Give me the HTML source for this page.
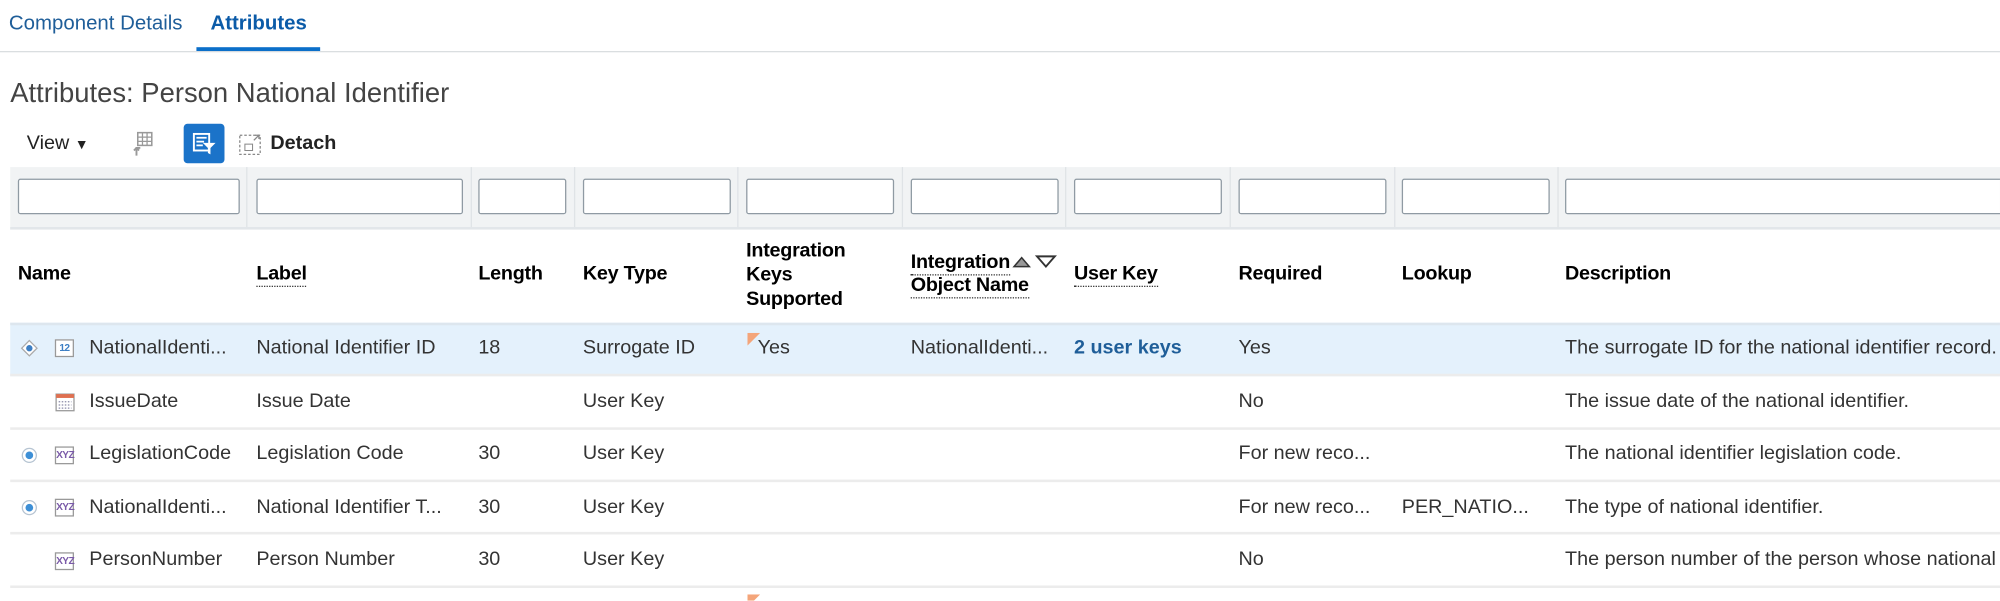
<!DOCTYPE html>
<html><head><meta charset="utf-8"><style>
html,body{margin:0;padding:0;background:#fff;width:2000px;height:600px;overflow:hidden}
#w{position:absolute;left:0;top:0;width:1568px;height:471px;overflow:hidden;transform:scale(1.2755);transform-origin:0 0;font-family:"Liberation Sans",Arial,sans-serif;color:#333}
.a{position:absolute;white-space:nowrap}
.t{font-size:15.5px}
.h{font-size:15.5px;font-weight:bold;color:#000;letter-spacing:-0.2px}
.u{border-bottom:1px dotted #333;padding-bottom:1px}
.inp{position:absolute;top:140px;height:28px;border:1px solid #8f9aa3;border-radius:2px;background:#fff;box-sizing:border-box}
.vd{position:absolute;top:131px;height:47px;width:1px;background:#dfe3e6}
.row{position:absolute;left:8px;width:1560px;border-bottom:2px solid #ececec;box-sizing:border-box}
.ic{position:absolute;left:43px;width:15px;height:14px;border:1px solid #999;background:#fff;box-sizing:border-box;font-size:8px;color:#7a5aa8;text-align:center;line-height:12px;font-weight:bold;letter-spacing:-0.5px}
.rad{position:absolute;left:17px;width:12px;height:12px;border-radius:50%;border:1px solid #b6c4d2;background:#fff;box-sizing:border-box}
.rad:after{content:"";position:absolute;left:2px;top:2px;width:6px;height:6px;border-radius:50%;background:#3d8fd6}
</style></head><body><div id="w">
<div class="a" style="left:7px;top:10px;font-size:16px;color:#1f5e99">Component Details</div>
<div class="a" style="left:165px;top:10px;font-size:16px;color:#0b5ba8;font-weight:bold">Attributes</div>
<div class="a" style="left:0;top:40px;width:1568px;height:1px;background:#d9dde0"></div>
<div class="a" style="left:154px;top:37px;width:97px;height:3px;background:#0b6fc9"></div>
<div class="a" style="left:8px;top:61px;font-size:21.5px;color:#444;font-weight:300">Attributes: Person National Identifier</div>
<div class="a" style="left:21px;top:104px;font-size:15.5px;color:#222">View <span style="font-size:11px">&#9660;</span></div>
<svg class="a" style="left:103px;top:103px" width="18" height="20" viewBox="0 0 18 20"><rect x="5" y="1" width="11" height="10" fill="none" stroke="#999" stroke-width="1.2"/><path d="M5 4.5h11M5 7.8h11M8.7 1v10M12.3 1v10" stroke="#999" stroke-width="1"/><path d="M4 19v-6h3M4 13l-2 2M4 13l2 2" stroke="#999" stroke-width="1.5" fill="none"/></svg>
<div class="a" style="left:144px;top:97px;width:32px;height:31px;background:#1b73c9;border-radius:3px"></div>
<svg class="a" style="left:150px;top:103px" width="20" height="19" viewBox="0 0 20 19"><rect x="2" y="2" width="12" height="13" fill="none" stroke="#fff" stroke-width="1.5"/><path d="M4 5h8M4 8h6M4 11h5" stroke="#fff" stroke-width="1.4"/><path d="M9 9h10l-4 4v5l-2-1v-4z" fill="#fff"/></svg>
<svg class="a" style="left:187px;top:104px" width="19" height="18" viewBox="0 0 19 18"><rect x="1" y="2" width="16" height="15" fill="none" stroke="#888" stroke-dasharray="2 1.5"/><rect x="5" y="9" width="6" height="5" fill="none" stroke="#888" stroke-width=".8"/><path d="M12 6l4-4M13 2h3v3" stroke="#888" fill="none"/></svg>
<div class="a" style="left:212px;top:104px;font-size:15.5px;font-weight:bold;color:#222">Detach</div>
<div class="a" style="left:8px;top:131px;width:1560px;height:47px;background:#f1f3f4;border-bottom:2px solid #e2e6e9"></div>
<div class="vd" style="left:193px"></div><div class="vd" style="left:369px"></div><div class="vd" style="left:450px"></div><div class="vd" style="left:578px"></div><div class="vd" style="left:707px"></div><div class="vd" style="left:835px"></div><div class="vd" style="left:964px"></div><div class="vd" style="left:1093px"></div><div class="vd" style="left:1221px"></div>
<div class="inp" style="left:14px;width:174px"></div><div class="inp" style="left:201px;width:162px"></div><div class="inp" style="left:375px;width:69px"></div><div class="inp" style="left:457px;width:116px"></div><div class="inp" style="left:585px;width:116px"></div><div class="inp" style="left:714px;width:116px"></div><div class="inp" style="left:842px;width:116px"></div><div class="inp" style="left:971px;width:116px"></div><div class="inp" style="left:1099px;width:116px"></div><div class="inp" style="left:1227px;width:360px"></div>
<div class="a h" style="left:14px;top:206px">Name</div>
<div class="a h" style="left:201px;top:206px"><span class="u">Label</span></div>
<div class="a h" style="left:375px;top:206px">Length</div>
<div class="a h" style="left:457px;top:206px">Key Type</div>
<div class="a h" style="left:585px;top:187px;line-height:19px">Integration<br>Keys<br>Supported</div>
<div class="a h" style="left:714px;top:197px;line-height:18px"><span class="u">Integration</span><br><span class="u">Object Name</span></div>
<svg class="a" style="left:793px;top:199px" width="38" height="12" viewBox="0 0 38 12"><path d="M2 10L8 3L14 10Z" fill="#999" stroke="#333" stroke-width="1.2"/><path d="M20 2h14L27 10Z" fill="#fff" stroke="#333" stroke-width="1.5"/></svg>
<div class="a h" style="left:842px;top:206px"><span class="u">User Key</span></div>
<div class="a h" style="left:971px;top:206px">Required</div>
<div class="a h" style="left:1099px;top:206px">Lookup</div>
<div class="a h" style="left:1227px;top:206px">Description</div>
<div class="row" style="top:253px;height:42px;background:#e4f1fc;border-top:2px solid #dde6ee"></div>
<div class="row" style="top:295px;height:42px"></div>
<div class="row" style="top:337px;height:41px"></div>
<div class="row" style="top:378px;height:41px"></div>
<div class="row" style="top:419px;height:42px"></div>
<svg class="a" style="left:16px;top:266px" width="14" height="14" viewBox="0 0 14 14"><path d="M7 1L13 7L7 13L1 7Z" fill="#fff" stroke="#aaa"/><circle cx="7" cy="7" r="2.5" fill="#3d7fc4"/></svg>
<div class="ic" style="top:266px;color:#3d7fc4">12</div>
<svg class="a" style="left:43px;top:306px" width="16" height="17" viewBox="0 0 16 17"><rect x="1" y="3" width="14" height="13" fill="#fff" stroke="#999"/><rect x="1" y="3" width="14" height="3" fill="#e07050"/><path d="M3 9h10M3 11.5h10M3 14h10" stroke="#8a8aa8" stroke-dasharray="1.2 1.2"/></svg>
<div class="rad" style="top:351px"></div><div class="ic" style="top:350px">XYZ</div>
<div class="rad" style="top:392px"></div><div class="ic" style="top:391px">XYZ</div>
<div class="ic" style="top:433px">XYZ</div>
<div class="a t" style="left:70px;top:264px">NationalIdenti...</div>
<div class="a t" style="left:70px;top:306px">IssueDate</div>
<div class="a t" style="left:70px;top:347px">LegislationCode</div>
<div class="a t" style="left:70px;top:389px">NationalIdenti...</div>
<div class="a t" style="left:70px;top:430px">PersonNumber</div>
<div class="a t" style="left:201px;top:264px">National Identifier ID</div>
<div class="a t" style="left:201px;top:306px">Issue Date</div>
<div class="a t" style="left:201px;top:347px">Legislation Code</div>
<div class="a t" style="left:201px;top:389px">National Identifier T...</div>
<div class="a t" style="left:201px;top:430px">Person Number</div>
<div class="a t" style="left:375px;top:264px">18</div>
<div class="a t" style="left:375px;top:347px">30</div>
<div class="a t" style="left:375px;top:389px">30</div>
<div class="a t" style="left:375px;top:430px">30</div>
<div class="a t" style="left:457px;top:264px">Surrogate ID</div>
<div class="a t" style="left:457px;top:306px">User Key</div>
<div class="a t" style="left:457px;top:347px">User Key</div>
<div class="a t" style="left:457px;top:389px">User Key</div>
<div class="a t" style="left:457px;top:430px">User Key</div>
<svg class="a" style="left:586px;top:261px" width="10" height="10"><path d="M0 0H10L0 10Z" fill="#f4a57a"/></svg>
<svg class="a" style="left:586px;top:466px" width="10" height="5"><path d="M0 0H10L5 5H0Z" fill="#f4a57a"/></svg>
<div class="a t" style="left:594px;top:264px">Yes</div>
<div class="a t" style="left:714px;top:264px">NationalIdenti...</div>
<div class="a t" style="left:842px;top:264px;color:#1f5e99;font-weight:bold">2 user keys</div>
<div class="a t" style="left:971px;top:264px">Yes</div>
<div class="a t" style="left:971px;top:306px">No</div>
<div class="a t" style="left:971px;top:347px">For new reco...</div>
<div class="a t" style="left:971px;top:389px">For new reco...</div>
<div class="a t" style="left:971px;top:430px">No</div>
<div class="a t" style="left:1099px;top:389px">PER_NATIO...</div>
<div class="a t" style="left:1227px;top:264px">The surrogate ID for the national identifier record.</div>
<div class="a t" style="left:1227px;top:306px">The issue date of the national identifier.</div>
<div class="a t" style="left:1227px;top:347px">The national identifier legislation code.</div>
<div class="a t" style="left:1227px;top:389px">The type of national identifier.</div>
<div class="a t" style="left:1227px;top:430px">The person number of the person whose national identifier this is.</div>
</div></body></html>
